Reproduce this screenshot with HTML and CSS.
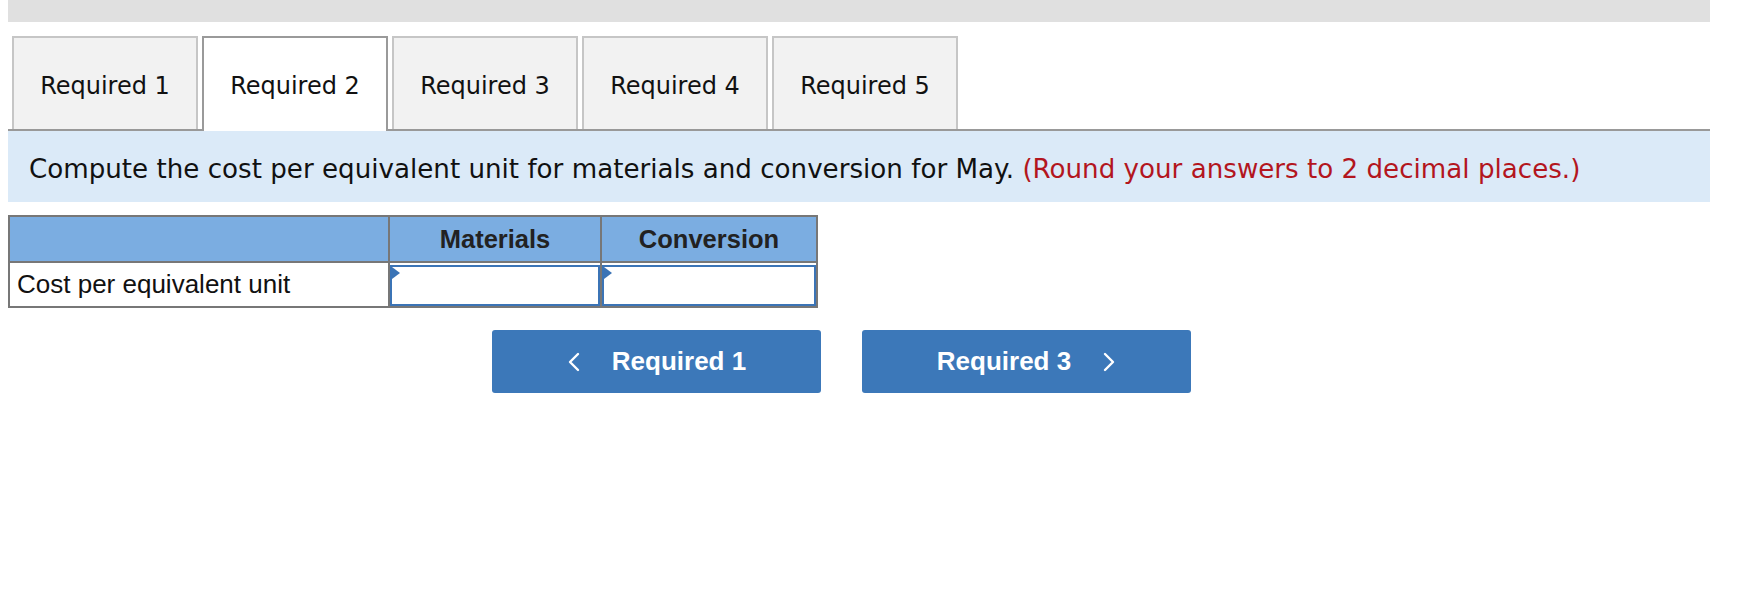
FILE: index.html
```html
<!DOCTYPE html>
<html lang="en">
<head>
<meta charset="utf-8">
<title>Required 2</title>
<link rel="stylesheet" href="styles.css">
</head>
<body>
<div class="page">
  <div class="topbar"></div>
  <div class="tabs">
    <div class="tab">Required 1</div>
    <div class="tab active">Required 2</div>
    <div class="tab">Required 3</div>
    <div class="tab">Required 4</div>
    <div class="tab">Required 5</div>
  </div>
  <div class="prompt">Compute the cost per equivalent unit for materials and conversion for May. <span class="note">(Round your answers to 2 decimal places.)</span></div>
  <table class="grid">
    <colgroup>
      <col class="c-label">
      <col class="c-mat">
      <col class="c-conv">
    </colgroup>
    <thead>
      <tr>
        <th></th>
        <th>Materials</th>
        <th>Conversion</th>
      </tr>
    </thead>
    <tbody>
      <tr>
        <td class="label">Cost per equivalent unit</td>
        <td class="cell"><div class="input"></div></td>
        <td class="cell"><div class="input"></div></td>
      </tr>
    </tbody>
  </table>
  <div class="nav">
    <button class="navbtn prev" type="button">
      <svg class="chev" width="14" height="22" viewBox="0 0 14 22"><polyline points="11,3 3,11 11,19" fill="none" stroke="#fff" stroke-width="2.4" stroke-linecap="round" stroke-linejoin="round"/></svg>
      <span>Required 1</span>
    </button>
    <button class="navbtn next" type="button">
      <span>Required 3</span>
      <svg class="chev" width="14" height="22" viewBox="0 0 14 22"><polyline points="3,3 11,11 3,19" fill="none" stroke="#fff" stroke-width="2.4" stroke-linecap="round" stroke-linejoin="round"/></svg>
    </button>
  </div>
</div>
</body>
</html>
```
FILE: styles.css
```css
html, body {
  margin: 0;
  padding: 0;
  background: #ffffff;
}

body {
  padding: 0 8px;
}

.page {
  width: 1702px;
}

.topbar {
  height: 22px;
  background: #e0e0e0;
}

.tabs {
  display: flex;
  gap: 4px;
  padding-left: 4px;
  margin-top: 14px;
  border-bottom: 2px solid #999999;
  height: 93px;
}

.tab {
  box-sizing: border-box;
  width: 186px;
  height: 93px;
  padding-top: 4px;
  display: flex;
  align-items: center;
  justify-content: center;
  background: #f2f2f2;
  border: 2px solid #c6c6c6;
  border-bottom: none;
  font-family: "DejaVu Sans", Verdana, sans-serif;
  font-size: 24px;
  color: #111111;
}

.tab.active {
  background: #ffffff;
  border-color: #9a9a9a;
  height: 95px;
  padding-bottom: 2px;
  margin-bottom: -2px;
}

.prompt {
  box-sizing: border-box;
  height: 71px;
  display: flex;
  align-items: center;
  padding-left: 21px;
  padding-top: 4px;
  background: #dbeaf8;
  font-family: "DejaVu Sans", Verdana, sans-serif;
  font-size: 26.15px;
  color: #111111;
  white-space: pre;
}

.note {
  color: #b3161e;
}

.grid {
  margin-top: 13px;
  border-collapse: collapse;
  table-layout: fixed;
  width: 808px;
  border: 2px solid #777777;
  font-family: "Liberation Sans", Arial, Helvetica, sans-serif;
}

.c-label { width: 380px; }
.c-mat { width: 212px; }
.c-conv { width: 216px; }

.grid th {
  height: 44px;
  padding: 0;
  background: #7badE1;
  border: 2px solid #777777;
  font-size: 25.5px;
  font-weight: bold;
  color: #222222;
  text-align: center;
}

.grid td {
  height: 42px;
  padding: 0;
  border: 2px solid #777777;
}

.grid td.label {
  padding-left: 7px;
  font-size: 26px;
  color: #111111;
  text-align: left;
}

.grid td.cell {
  padding: 1px 0 0 0;
}

.input {
  position: relative;
  box-sizing: border-box;
  height: 41px;
  border: 2px solid #3b74b6;
  background: #ffffff;
}

.input::before {
  content: "";
  position: absolute;
  top: 0;
  left: 0;
  width: 0;
  height: 0;
  border-left: 8px solid #3b74b6;
  border-top: 6px solid transparent;
  border-bottom: 6px solid transparent;
}

.nav {
  display: flex;
  gap: 41px;
  margin-top: 22px;
  padding-left: 484px;
}

.navbtn {
  box-sizing: border-box;
  width: 329px;
  height: 63px;
  display: flex;
  align-items: center;
  justify-content: center;
  gap: 31px;
  border: none;
  border-radius: 3px;
  background: #3c78b9;
  color: #ffffff;
  font-family: "Liberation Sans", Arial, Helvetica, sans-serif;
  font-size: 26px;
  font-weight: bold;
  padding: 0;
}

.chev {
  display: block;
}
```
